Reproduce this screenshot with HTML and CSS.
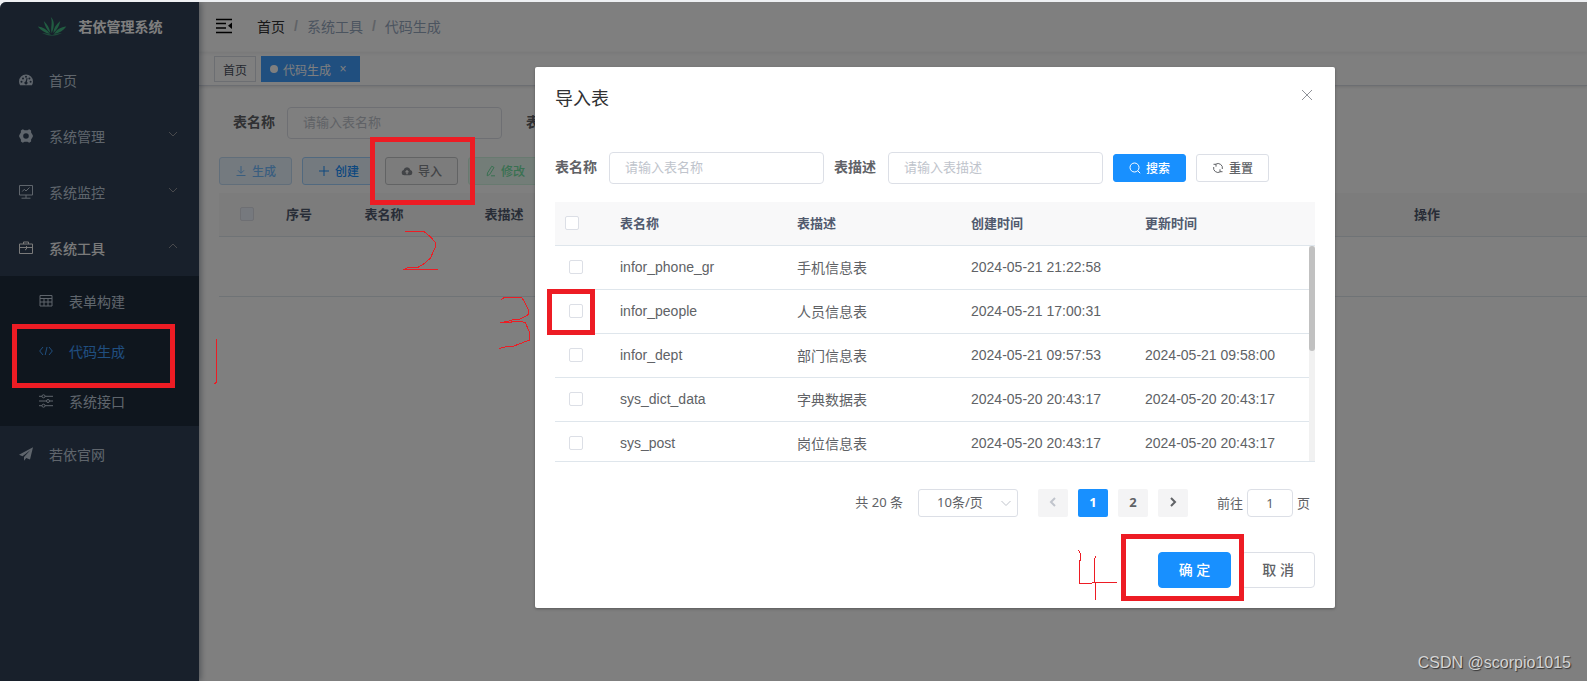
FILE: index.html
```html
<!DOCTYPE html>
<html lang="zh-CN">
<head>
<meta charset="utf-8">
<meta name="viewport" content="width=device-width, initial-scale=1">
<title>若依管理系统</title>
<link rel="stylesheet" href="styles.css">
</head>
<body>
<div class="screen">
  <div class="app">
    <aside class="sidebar">
      <a class="brand" href="#">
        <svg class="brand-logo" viewBox="0 0 30 20" aria-hidden="true">
          <path d="M14.700 17C13.200 11.500 16 7 13.800 1c3.800 3.500 4 9.500.9 16z"/>
          <path d="M13.300 17C12.500 12 10.500 8.500 6.800 5c1.200 5.500 3 8.800 6.500 12z"/>
          <path d="M16.300 17c.4-5 2.700-8.500 7-12-1.200 5.500-3.300 8.800-7 12z"/>
          <path d="M13 18C10 13.500 6 11 .8 10.500 4 14.500 8 16.800 13 18z"/>
          <path d="M17 18c2.500-4.500 6.800-7 12.300-7.500C26.500 14.500 22 17 17 18z"/>
          <path d="M5 17c4 .2 7 .8 10 2.300 3-1.500 6-2.100 10-2.300-3 1.600-6.500 2.600-10 2.700-3.500-.1-7-1.100-10-2.700z" opacity=".7"/>
        </svg>
        <span>若依管理系统</span>
      </a>
      <nav class="menu">
        <a class="menu-item" href="#">
          <svg class="icon solid" viewBox="0 0 14 14"><path fill-rule="evenodd" d="M7 1.500a7 7 0 0 0-7 7c0 1.500.4 2.700 1.100 3.800h11.800A7 7 0 0 0 14 8.500a7 7 0 0 0-7-7zM2.500 7.700a1 1 0 1 1 0 2 1 1 0 0 1 0-2zM4 4.400a1 1 0 1 1 0 2 1 1 0 0 1 0-2zM7 2.800a1 1 0 1 1 0 2 1 1 0 0 1 0-2zM8.600 5.300l-.7 3.500a1.500 1.500 0 1 1-1.300-.3l1-3.400zM10.400 4.400a1 1 0 1 1 0 2 1 1 0 0 1 0-2zM11.600 7.700a1 1 0 1 1 0 2 1 1 0 0 1 0-2z"/></svg>
          <span>首页</span>
        </a>
        <a class="menu-item" href="#">
          <svg class="icon solid" viewBox="0 0 14 14"><path fill-rule="evenodd" d="M3.800 0.300l1.700.9h3l1.700-.9 1.900 1.200v2l1.400 2.300.5 1.200-.5 1.200-1.400 2.300v2l-1.900 1.200-1.700-.9h-3l-1.700.9-1.900-1.200v-2L.5 8.200 0 7l.5-1.200 1.400-2.300v-2zM7 4.200a2.800 2.800 0 1 0 0 5.600 2.800 2.800 0 0 0 0-5.600z"/></svg>
          <span>系统管理</span>
          <svg class="caret" viewBox="0 0 12 12"><path d="M2 4l4 4 4-4"/></svg>
        </a>
        <a class="menu-item" href="#">
          <svg class="icon" viewBox="0 0 14 14"><path d="M.5.500h13v9.500H.5zM7 10v3M2.500 13.200h9M3.300 6.500l2-2.200L7 6l3.500-3.500"/></svg>
          <span>系统监控</span>
          <svg class="caret" viewBox="0 0 12 12"><path d="M2 4l4 4 4-4"/></svg>
        </a>
        <a class="menu-item open" href="#">
          <svg class="icon" viewBox="0 0 14 14"><path d="M.5 3h13v9.500H.5zM4.500 3V1h5v2M.5 6.500H5M9 6.500h4.500M5 6.500h4M7.500 5v3l-1.500 1"/></svg>
          <span>系统工具</span>
          <svg class="caret" viewBox="0 0 12 12"><path d="M2 8l4-4 4 4"/></svg>
        </a>
        <div class="submenu">
          <a class="menu-item" href="#">
            <svg class="icon" viewBox="0 0 14 14"><path d="M1 1.500h12v10.500H1zM1 4.500h12M1 8h12M5 4.500V12M9 4.500V12"/></svg>
            <span>表单构建</span>
          </a>
          <a class="menu-item active" href="#">
            <svg class="icon" viewBox="0 0 14 14"><path d="M4 3L.7 7 4 11M10 3l3.300 4L10 11M8 3L6.200 11"/></svg>
            <span>代码生成</span>
          </a>
          <a class="menu-item" href="#">
            <svg class="icon" viewBox="0 0 14 14"><path d="M0 2.300h3M6 2.300h8M0 7h7.500M10.500 7H14M0 11.700h3M6 11.700h8"/><circle cx="4.500" cy="2.300" r="1.500"/><circle cx="9" cy="7" r="1.500"/><circle cx="4.500" cy="11.700" r="1.500"/></svg>
            <span>系统接口</span>
          </a>
        </div>
        <a class="menu-item" href="#">
          <svg class="icon solid" viewBox="0 0 14 14"><path d="M14 .3L0 7.800l3.500 1.500L11.500 3 5 10v3.700l2.200-2.700 3.800 1.600z"/></svg>
          <span>若依官网</span>
        </a>
      </nav>
    </aside>

    <main class="main">
      <header class="navbar">
        <button class="fold" type="button" aria-label="折叠菜单">
          <svg viewBox="0 0 16 16"><path d="M0 1.500h16M0 5.500h10M0 10h10M0 14.500h16" fill="none" stroke="#000" stroke-width="1.500"/><path d="M16 4.500v6.500L12 7.800z"/></svg>
        </button>
        <nav class="crumbs" aria-label="路径">
          <a class="here" href="#">首页</a><i>/</i><span>系统工具</span><i>/</i><span>代码生成</span>
        </nav>
      </header>
      <div class="tags">
        <a class="tag" href="#">首页</a>
        <a class="tag active" href="#">代码生成<span class="tag-close">×</span></a>
      </div>
      <section class="content">
        <form class="query">
          <div class="field"><label for="q-name">表名称</label><input class="text" id="q-name" placeholder="请输入表名称"></div>
          <div class="field"><label for="q-desc">表描述</label><input class="text" id="q-desc" placeholder="请输入表描述"></div>
        </form>
        <div class="toolbar">
          <button class="btn plain-blue disabled" type="button"><svg class="bi" viewBox="0 0 12 12"><path d="M6 1v7M3 5.300l3 3 3-3M1.500 10.500h9"/></svg>生成</button>
          <button class="btn plain-blue" type="button"><svg class="bi" viewBox="0 0 12 12"><path d="M6 1v10M1 6h10"/></svg>创建</button>
          <button class="btn plain-gray" type="button"><svg class="bi cloud" viewBox="0 0 12 12"><path fill-rule="evenodd" d="M3.200 10.300A2.700 2.700 0 0 1 2.600 5a3.500 3.500 0 0 1 6.800 0 2.700 2.700 0 0 1-.6 5.300zM6 4.800L3.800 7.300h1.500v2h1.400v-2h1.500z"/></svg>导入</button>
          <button class="btn plain-green" type="button"><svg class="bi" viewBox="0 0 12 12"><path d="M7.800 1.200l2.200 1.300-4.300 7-2.500 1.300.3-2.800zM7 10.800h4"/></svg>修改</button>
        </div>
        <table class="list">
          <colgroup><col class="c-check"><col class="c-index"><col class="c-text"><col class="c-text"><col><col class="c-ops"></colgroup>
          <thead>
            <tr><th><input class="check" type="checkbox" aria-label="全选"></th><th>序号</th><th>表名称</th><th>表描述</th><th></th><th>操作</th></tr>
          </thead>
          <tbody><tr><td colspan="6"></td></tr></tbody>
        </table>
      </section>
    </main>
  </div>

  <div class="mask">
    <section class="dialog" role="dialog" aria-labelledby="dlg-title">
      <header class="dialog-head">
        <h2 id="dlg-title">导入表</h2>
        <button class="close" type="button" aria-label="关闭"><svg viewBox="0 0 16 16"><path d="M3 3l10 10M13 3L3 13"/></svg></button>
      </header>
      <form class="search">
        <div class="field"><label for="d-name">表名称</label><input class="text" id="d-name" placeholder="请输入表名称"></div>
        <div class="field"><label for="d-desc">表描述</label><input class="text" id="d-desc" placeholder="请输入表描述"></div>
        <button class="btn primary" type="button"><svg class="bi" viewBox="0 0 12 12"><circle cx="5.500" cy="5.500" r="4.500"/><path d="M8.800 8.800l2.400 2.400"/></svg>搜索</button>
        <button class="btn" type="button"><svg class="bi" viewBox="0 0 12 12"><path d="M3.700 2.200A4.400 4.400 0 0 1 10.300 7M8.300 9.800A4.400 4.400 0 0 1 1.700 5M1.500 2.300h2.500v2.400M10.500 9.700H8V7.300"/></svg>重置</button>
      </form>
      <div class="grid">
        <table class="picker">
          <colgroup><col class="p-check"><col class="p-name"><col class="p-col"><col class="p-col"><col></colgroup>
          <thead><tr><th><input class="check" type="checkbox" aria-label="全选"></th><th>表名称</th><th>表描述</th><th>创建时间</th><th>更新时间</th></tr></thead>
          <tbody>
            <tr><td><input class="check" type="checkbox" aria-label="infor_phone_gr"></td><td>infor_phone_gr</td><td>手机信息表</td><td>2024-05-21 21:22:58</td><td></td></tr>
            <tr><td><input class="check" type="checkbox" aria-label="infor_people"></td><td>infor_people</td><td>人员信息表</td><td>2024-05-21 17:00:31</td><td></td></tr>
            <tr><td><input class="check" type="checkbox" aria-label="infor_dept"></td><td>infor_dept</td><td>部门信息表</td><td>2024-05-21 09:57:53</td><td>2024-05-21 09:58:00</td></tr>
            <tr><td><input class="check" type="checkbox" aria-label="sys_dict_data"></td><td>sys_dict_data</td><td>字典数据表</td><td>2024-05-20 20:43:17</td><td>2024-05-20 20:43:17</td></tr>
            <tr><td><input class="check" type="checkbox" aria-label="sys_post"></td><td>sys_post</td><td>岗位信息表</td><td>2024-05-20 20:43:17</td><td>2024-05-20 20:43:17</td></tr>
          </tbody>
        </table>
        <div class="track" aria-hidden="true"><div class="thumb"></div></div>
      </div>
      <div class="pager">
        <span class="total">共 20 条</span>
        <div class="size">
          <select aria-label="每页条数"><option>10条/页</option></select>
          <svg viewBox="0 0 12 12"><path d="M1.500 4L6 8.500 10.500 4"/></svg>
        </div>
        <div class="pages">
          <button class="page off" type="button" aria-label="上一页"><svg viewBox="0 0 12 12"><path d="M8 2L4 6l4 4"/></svg></button>
          <button class="page current" type="button">1</button>
          <button class="page" type="button">2</button>
          <button class="page" type="button" aria-label="下一页"><svg viewBox="0 0 12 12"><path d="M4 2l4 4-4 4"/></svg></button>
        </div>
        <label class="jump">前往<input value="1">页</label>
      </div>
      <footer class="dialog-foot">
        <button class="btn large primary" type="button">确 定</button>
        <button class="btn large" type="button">取 消</button>
      </footer>
    </section>
  </div>

  <svg class="marks" width="1587" height="679" viewBox="0 2 1587 679" aria-hidden="true">
    <g stroke-width="5">
      <rect x="14.500" y="326.500" width="158" height="59"/>
      <rect x="372.500" y="139.500" width="100" height="63"/>
      <rect x="549.500" y="291.500" width="43" height="41"/>
      <rect x="1123.500" y="536.500" width="118" height="62"/>
    </g>
    <g stroke-width="1" shape-rendering="crispEdges">
      <path d="M216.500 339v43.500l-2 1"/>
      <path d="M405 231.500h19l6 5 5.500 6v4l-3 7-2 4.500-6 5.500-6 3.500h-9l-6 2.500h34"/>
      <path d="M501 299.500l3.500-2h17l3 4 4 9v4l-8.500 4.500-7 .5-5 2-8 1h11v-1h11l3.500 1.500 4 9v8l-15.500 6-7 .5-8 2"/>
      <path d="M1078.500 550l2 4v6l-1 1v22.500h12l1-1h24M1095.500 556l-1 4v22l1 1v17"/>
    </g>
  </svg>
  <div class="watermark">CSDN @scorpio1015</div>
</div>
</body>
</html>
```
FILE: styles.css
```css
* { box-sizing: border-box; }

body {
  margin: 0;
  padding-top: 2px;
  background: #eef0f3;
  color: #606266;
  font: 14px "Liberation Sans", "Noto Sans CJK SC", sans-serif;
}

a { color: inherit; text-decoration: none; }
button, input, select { font-family: "Noto Sans", "Noto Sans CJK SC", sans-serif; margin: 0; }
svg { display: block; flex: none; }

.screen {
  position: relative;
  min-height: calc(100vh - 2px);
  display: flex;
  border-radius: 6px 0 0 0;
  overflow: hidden;
}

.app { flex: 1; display: flex; min-width: 0; background: #fff; }

/* Sidebar */
.sidebar {
  position: relative;
  flex: none;
  width: 199px;
  background: #304156;
  color: #bfcbd9;
  box-shadow: 2px 0 6px rgba(0, 21, 41, .35);
}

.brand {
  height: 50px;
  display: flex;
  align-items: center;
  justify-content: center;
  gap: 12px;
  padding-bottom: 2px;
  color: #fff;
  font-weight: 700;
}
.brand-logo { width: 30px; height: 20px; fill: #42b983; }

.menu-item {
  height: 56px;
  display: flex;
  align-items: center;
  padding: 0 20px 0 19px;
}
.menu-item span { flex: 1; }
.menu-item.open { color: #f4f4f5; font-weight: 500; }
.menu-item.active { color: #409eff; }
.icon { width: 14px; height: 14px; margin-right: 16px; fill: none; stroke: currentColor; stroke-width: 1; }
.icon.solid { fill: currentColor; stroke: none; }
.caret { width: 12px; height: 12px; margin-bottom: 4px; fill: none; stroke: #909399; }
.submenu { background: #1f2d3d; }
.submenu .menu-item { height: 50px; padding-left: 39px; }

/* Top bars */
.main { flex: 1; min-width: 0; }
.navbar {
  height: 50px;
  display: flex;
  align-items: center;
  gap: 25px;
  padding: 0 17px 2px;
  box-shadow: 0 1px 4px rgba(0, 21, 41, .08);
}
.fold { width: 16px; height: 16px; padding: 0; border: 0; background: none; }
.fold svg { width: 16px; height: 16px; }
.crumbs { display: flex; align-items: center; color: #97a8be; }
.crumbs .here { color: #303133; }
.crumbs i { margin: 0 9px; color: #c0c4cc; font-style: normal; font-weight: 700; }

.tags {
  height: 34px;
  display: flex;
  gap: 5px;
  padding: 4px 15px;
  border-bottom: 1px solid #d8dce5;
  box-shadow: 0 1px 3px rgba(0, 0, 0, .12);
}
.tag {
  height: 26px;
  display: flex;
  align-items: center;
  padding: 0 8px;
  border: 1px solid #d8dce5;
  color: #495060;
  font-size: 12px;
}
.tag.active { border-color: #409eff; background: #409eff; color: #fff; }
.tag.active::before {
  content: "";
  width: 8px;
  height: 8px;
  margin-right: 5px;
  border-radius: 50%;
  background: #fff;
}
.tag-close { width: 16px; margin-left: 4px; text-align: center; }

/* Page content */
.content { padding: 21px 0 0 20px; }
.query { display: flex; gap: 10px; overflow: hidden; }
.field { display: flex; align-items: center; flex: none; }
.field label { font-weight: 700; padding: 0 12px 4px 0; }
.query label { width: 68px; text-align: right; }
.text {
  width: 215px;
  height: 32px;
  padding: 0 15px 3px;
  border: 1px solid #dcdfe6;
  border-radius: 4px;
  background: #fff;
  font-size: 13px;
  color: #606266;
}
.text::placeholder { color: #c0c4cc; opacity: 1; }

.btn {
  height: 28px;
  display: flex;
  align-items: center;
  gap: 5px;
  padding: 0 15px 1px;
  border: 1px solid #dcdfe6;
  border-radius: 3px;
  background: #fff;
  color: #606266;
  font-size: 12px;
  font-weight: 500;
  white-space: nowrap;
}
.bi { width: 12px; height: 12px; fill: none; stroke: currentColor; stroke-width: 1; }
.bi.cloud { fill: currentColor; stroke: none; }
.btn.primary { border-color: #1890ff; background: #1890ff; color: #fff; }
.btn.large { height: 36px; padding: 0 20px 2px; border-radius: 4px; font-size: 14px; }
.plain-blue { background: #e8f4ff; border-color: #a3d3ff; color: #1890ff; }
.plain-blue.disabled { border-color: #c2dcf5; color: #74bcff; }
.plain-gray { background: #f9f9f9; border-color: #c4c6c9; color: #85888e; }
.plain-green { background: #e7faf0; border-color: #d0f5e0; color: #71e2a3; }

.toolbar { display: flex; gap: 10px; padding: 18px 0 8px; }

.list { width: 100%; table-layout: fixed; border-collapse: separate; border-spacing: 0; }
.list th { height: 44px; padding: 0 0 2px; background: #f8f8f9; border-bottom: 1px solid #dfe6ec; color: #515a6e; font-size: 13px; }
.list td { height: 60px; padding: 0; border-bottom: 1px solid #dfe6ec; }
.c-check { width: 55px; }
.c-index { width: 50px; }
.c-text { width: 120px; }
.c-ops { width: 320px; }

.check {
  appearance: none;
  display: inline-block;
  width: 14px;
  height: 14px;
  margin: 0;
  border: 1px solid #dcdfe6;
  border-radius: 2px;
  background: #fff;
  vertical-align: middle;
}
.list .check { background: #edf2fc; }

/* Dialog */
.mask {
  position: absolute;
  inset: 0;
  display: flex;
  justify-content: flex-end;
  align-items: flex-start;
  padding: 65px 252px 0 0;
  background: rgba(0, 0, 0, .5);
}
.dialog {
  width: 800px;
  padding: 20px;
  border-radius: 2px;
  background: #fff;
  box-shadow: 0 1px 3px rgba(0, 0, 0, .3);
}
.dialog-head { display: flex; justify-content: space-between; align-items: flex-start; padding-bottom: 41px; }
.dialog-head h2 { margin: 0; color: #303133; font-size: 18px; line-height: 24px; font-weight: 400; }
.close { width: 16px; height: 16px; padding: 0; border: 0; background: none; }
.close svg { width: 16px; height: 16px; fill: none; stroke: #909399; }

.search { display: flex; align-items: center; gap: 10px; padding-bottom: 18px; }

.grid { position: relative; height: 260px; overflow: hidden; border-bottom: 1px solid #dfe6ec; }
.picker { width: 100%; table-layout: fixed; border-collapse: separate; border-spacing: 0; }
.picker th, .picker td { height: 44px; padding: 0 10px 2px; border-bottom: 1px solid #dfe6ec; text-align: left; }
.picker th { background: #f8f8f9; color: #515a6e; font-size: 13px; }
.picker td:first-child { padding: 0 0 3px 14px; }
.p-check { width: 55px; }
.p-name { width: 177px; }
.p-col { width: 174px; }
.track { position: absolute; top: 44px; right: 0; bottom: 0; width: 6px; background: #f1f1f1; }
.thumb { height: 49%; border-radius: 3px; background: #c1c1c1; }

.pager {
  display: flex;
  align-items: center;
  justify-content: flex-end;
  padding: 27px 5px 35px 0;
  font: 13px "Noto Sans", "Noto Sans CJK SC", sans-serif;
  line-height: 26px;
}
.total { padding-bottom: 2px; }
.size { position: relative; margin: 0 20px 0 15px; }
.size select {
  appearance: none;
  display: block;
  width: 100px;
  height: 28px;
  padding: 0 16px 2px 0;
  border: 1px solid #dcdfe6;
  border-radius: 3px;
  background: #fff;
  color: #606266;
  font-size: 13px;
  text-align: center;
  text-align-last: center;
}
.size svg { position: absolute; top: 8px; right: 6px; width: 12px; height: 12px; fill: none; stroke: #c0c4cc; }
.pages { display: flex; gap: 10px; }
.page {
  width: 30px;
  height: 28px;
  display: flex;
  align-items: center;
  justify-content: center;
  padding: 0 0 2px;
  border: 0;
  border-radius: 2px;
  background: #f4f4f5;
  color: #606266;
  font-size: 13px;
  font-weight: 700;
}
.page svg { width: 12px; height: 12px; fill: none; stroke: currentColor; stroke-width: 2; }
.page.off { color: #c0c4cc; }
.page.current { background: #1890ff; color: #fff; }
.jump { display: flex; align-items: center; gap: 4px; margin-left: 29px; }
.jump input {
  width: 46px;
  height: 28px;
  padding: 0;
  border: 1px solid #dcdfe6;
  border-radius: 4px;
  color: #606266;
  font-size: 13px;
  text-align: center;
}
.dialog-foot { display: flex; justify-content: flex-end; gap: 10px; }

/* Hand-drawn marks over the screen */
.marks { position: absolute; top: 0; left: 0; fill: none; stroke: #ed1c24; pointer-events: none; }
.watermark {
  position: absolute;
  right: 16px;
  bottom: 9px;
  color: #d4d4d4;
  font-size: 16px;
  text-shadow: 1px 1px 1px rgba(0, 0, 0, .6);
}
```
